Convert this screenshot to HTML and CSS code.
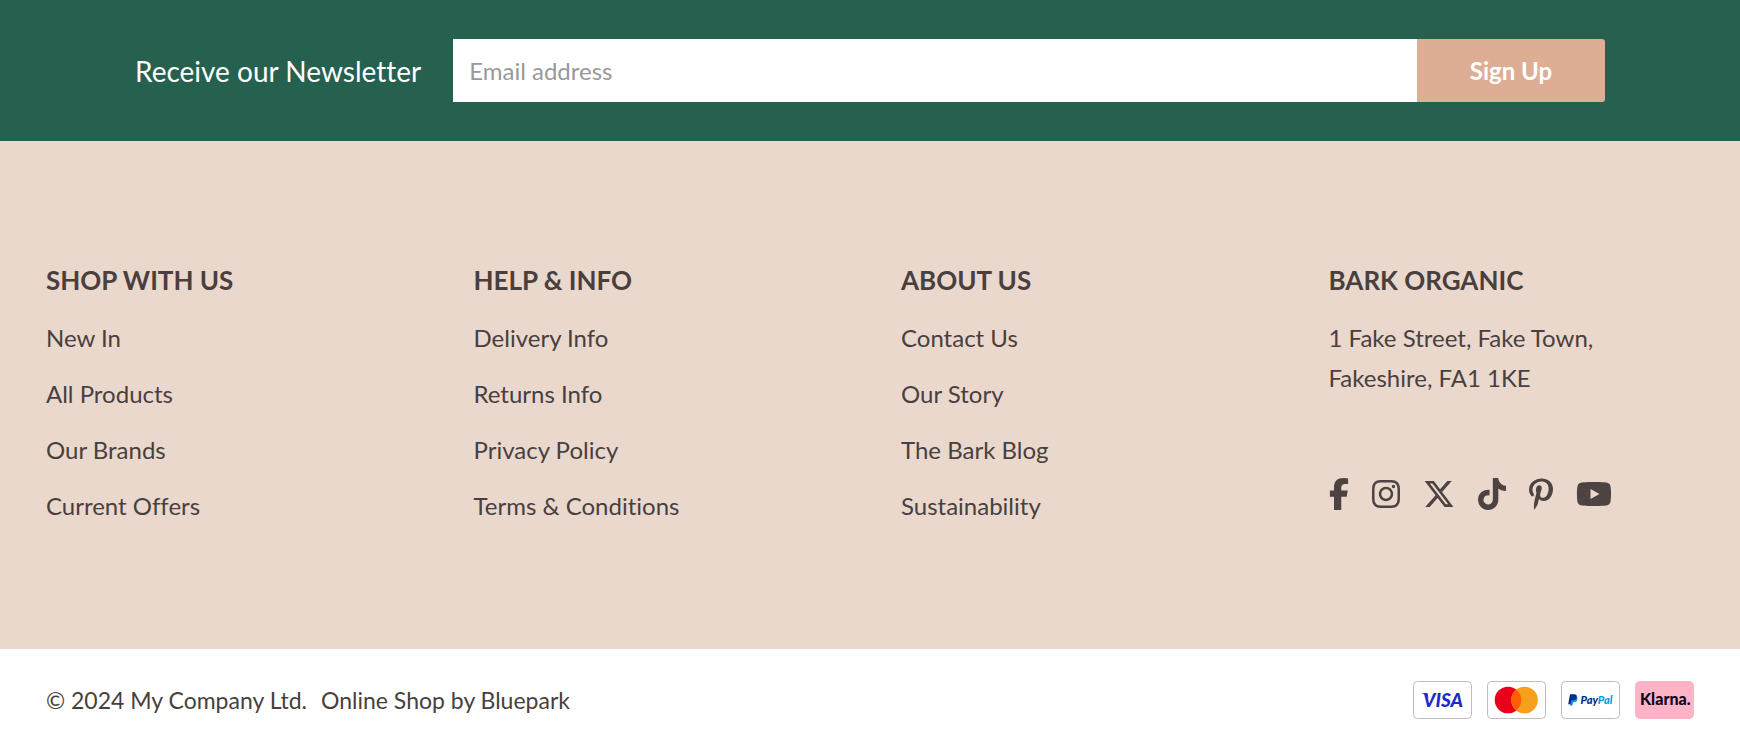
FILE: index.html
```html
<!DOCTYPE html>
<html lang="en">
<head>
<meta charset="utf-8">
<meta name="viewport" content="width=device-width, initial-scale=1">
<title>Bark Organic</title>
<link rel="stylesheet" href="styles.css">
</head>
<body>
<section class="newsletter">
  <form class="newsletter-form">
    <label class="newsletter-label" for="email">Receive our Newsletter</label>
    <div class="newsletter-field">
      <input class="newsletter-input" type="email" id="email" placeholder="Email address">
      <button class="newsletter-button" type="submit">Sign Up</button>
    </div>
  </form>
</section>

<footer class="footer">
  <div class="footer-columns">
    <nav class="column" aria-labelledby="shop">
      <h2 class="column-title" id="shop">SHOP WITH US</h2>
      <ul class="links">
        <li><a href="#">New In</a></li>
        <li><a href="#">All Products</a></li>
        <li><a href="#">Our Brands</a></li>
        <li><a href="#">Current Offers</a></li>
      </ul>
    </nav>
    <nav class="column" aria-labelledby="help">
      <h2 class="column-title" id="help">HELP &amp; INFO</h2>
      <ul class="links">
        <li><a href="#">Delivery Info</a></li>
        <li><a href="#">Returns Info</a></li>
        <li><a href="#">Privacy Policy</a></li>
        <li><a href="#">Terms &amp; Conditions</a></li>
      </ul>
    </nav>
    <nav class="column" aria-labelledby="about">
      <h2 class="column-title" id="about">ABOUT US</h2>
      <ul class="links">
        <li><a href="#">Contact Us</a></li>
        <li><a href="#">Our Story</a></li>
        <li><a href="#">The Bark Blog</a></li>
        <li><a href="#">Sustainability</a></li>
      </ul>
    </nav>
    <section class="column">
      <h2 class="column-title">BARK ORGANIC</h2>
      <address class="address">1 Fake Street, Fake Town,<br>Fakeshire, FA1 1KE</address>
      <div class="social">
        <a href="#" aria-label="Facebook"><svg class="social-icon" viewBox="0 0 320 512"><path d="M80 299.3V512H196V299.3h86.5l18-97.8H196V166.9c0-51.7 20.3-71.5 72.7-71.5c16.3 0 29.4 .4 37 1.2V7.9C291.4 4 256.4 0 236.2 0C129.3 0 80 50.5 80 159.4v42.1H14v97.8H80z"/></svg></a>
        <a href="#" aria-label="Instagram"><svg class="social-icon" viewBox="0 0 448 512"><path d="M224.1 141c-63.6 0-114.9 51.3-114.9 114.9s51.3 114.9 114.9 114.9S339 319.5 339 255.9 287.7 141 224.1 141zm0 189.6c-41.1 0-74.7-33.5-74.7-74.7s33.5-74.7 74.7-74.7 74.7 33.5 74.7 74.7-33.6 74.7-74.7 74.7zm146.4-194.3c0 14.9-12 26.8-26.8 26.8-14.9 0-26.8-12-26.8-26.8s12-26.8 26.8-26.8 26.8 12 26.8 26.8zm76.1 27.2c-1.7-35.9-9.9-67.7-36.2-93.9-26.2-26.2-58-34.4-93.9-36.2-37-2.1-147.9-2.1-184.9 0-35.8 1.7-67.6 9.9-93.9 36.1s-34.4 58-36.2 93.9c-2.1 37-2.1 147.9 0 184.9 1.7 35.9 9.9 67.7 36.2 93.9s58 34.4 93.9 36.2c37 2.1 147.9 2.1 184.9 0 35.9-1.7 67.7-9.9 93.9-36.2 26.2-26.2 34.4-58 36.2-93.9 2.1-37 2.1-147.8 0-184.8zM398.8 388c-7.8 19.6-22.9 34.7-42.6 42.6-29.5 11.7-99.5 9-132.1 9s-102.7 2.6-132.1-9c-19.6-7.8-34.7-22.9-42.6-42.6-11.7-29.5-9-99.5-9-132.1s-2.6-102.7 9-132.1c7.8-19.6 22.9-34.7 42.6-42.6 29.5-11.7 99.5-9 132.1-9s102.7-2.6 132.1 9c19.6 7.8 34.7 22.9 42.6 42.6 11.7 29.5 9 99.5 9 132.1s2.7 102.7-9 132.1z"/></svg></a>
        <a href="#" aria-label="X"><svg class="social-icon" viewBox="0 0 512 512"><path d="M389.2 48h70.6L305.6 224.2 487 464H345L233.7 318.6 106.5 464H35.8L200.7 275.5 26.8 48H172.4L272.9 180.9 389.2 48zM364.4 421.8h39.1L151.1 88h-42L364.4 421.8z"/></svg></a>
        <a href="#" aria-label="TikTok"><svg class="social-icon" viewBox="0 0 448 512"><path d="M448 209.9a210.1 210.1 0 0 1-122.8-39.3V349.4A162.6 162.6 0 1 1 185 188.3V278.2a74.6 74.6 0 1 0 52.2 71.2V0l88 0a121.2 121.2 0 0 0 1.9 22.2h0A122.2 122.2 0 0 0 381 102.4a121.4 121.4 0 0 0 67 20.1z"/></svg></a>
        <a href="#" aria-label="Pinterest"><svg class="social-icon" viewBox="0 0 384 512"><path d="M204 6.5C101.400 6.500 0 74.900 0 185.600 0 256 39.600 296 63.600 296c9.900 0 15.600-27.600 15.600-35.400 0-9.300-23.700-29.100-23.700-67.800 0-80.400 61.200-137.400 140.400-137.400 68.100 0 118.500 38.700 118.500 109.800 0 53.100-21.300 152.700-90.300 152.700-24.900 0-46.200-18-46.200-43.800 0-37.800 26.400-74.400 26.400-113.400 0-66.200-93.900-54.200-93.900 25.800 0 16.800 2.100 35.400 9.600 50.700-13.800 59.400-42 147.900-42 209.100 0 18.900 2.700 37.500 4.500 56.400 3.400 3.800 1.700 3.400 6.900 1.500 50.400-69 48.600-82.500 71.400-172.800 12.300 23.400 44.100 36 69.300 36 106.200 0 153.900-103.500 153.900-196.800C384 71.300 298.200 6.500 204 6.500z"/></svg></a>
        <a href="#" aria-label="YouTube"><svg class="social-icon" viewBox="0 0 576 512"><path d="M549.700 124.100c-6.300-23.700-24.800-42.300-48.300-48.600C458.800 64 288 64 288 64S117.200 64 74.600 75.500c-23.500 6.300-42 24.900-48.300 48.600-11.400 42.900-11.400 132.300-11.400 132.300s0 89.400 11.400 132.300c6.300 23.700 24.800 41.500 48.300 47.800C117.200 448 288 448 288 448s170.800 0 213.400-11.500c23.500-6.300 42-24.200 48.300-47.800 11.400-42.900 11.400-132.300 11.400-132.300s0-89.400-11.400-132.300zM232.200 337.600V175.200l142.700 81.200-142.700 81.200z"/></svg></a>
      </div>
    </section>
  </div>
</footer>

<div class="bottom">
  <p class="legal"><span>© 2024 My Company Ltd.</span><a href="#">Online Shop by Bluepark</a></p>
  <ul class="payments">
    <li><svg class="card" viewBox="0 0 59 38" role="img" aria-label="Visa">
      <rect class="card-frame" x=".5" y=".5" width="58" height="37" rx="4"/>
      <path fill="#1c2bc9" d="M8 12.200h6.500l1 5C13.800 14.500 11.500 13 8 12.200z"/>
      <text class="visa" x="10" y="26">VISA</text>
    </svg></li>
    <li><svg class="card" viewBox="0 0 59 38" role="img" aria-label="Mastercard">
      <rect class="card-frame" x=".5" y=".5" width="58" height="37" rx="4"/>
      <circle cx="21" cy="19" r="13.300" fill="#eb001b"/>
      <circle cx="37.500" cy="19" r="13.300" fill="#f79e1b"/>
      <path fill="#ff5f00" d="M29.250 8.570a13.300 13.300 0 0 1 0 20.860a13.300 13.300 0 0 1 0-20.860z"/>
    </svg></li>
    <li><svg class="card" viewBox="0 0 59 38" role="img" aria-label="PayPal">
      <rect class="card-frame" x=".5" y=".5" width="58" height="37" rx="4"/>
      <path fill="#0093de" d="M15.300 15.500c1.500.8 1.500 2.800.5 4.300-.8 1.100-2 1.400-3.700 1.400l-.7 3.200H8.900l1.500-7z"/>
      <path fill="#002d8a" d="M9 13.300h4.200c2.300 0 3 1.300 2.500 3.100-.5 2-2 2.900-4.200 2.900h-1.200l-.7 3.900H7.200z"/>
      <text class="paypal" x="19.500" y="22.500">Pay<tspan fill="#009cde">Pal</tspan></text>
    </svg></li>
    <li><svg class="card" viewBox="0 0 59 38" role="img" aria-label="Klarna">
      <rect width="59" height="38" rx="5" fill="#ffb3c7"/>
      <text class="klarna" x="5" y="24">Klarna.</text>
    </svg></li>
  </ul>
</div>
</body>
</html>
```
FILE: styles.css
```css
* {
  box-sizing: border-box;
}

body {
  margin: 0;
  background: #fff;
  color: #483f3e;
  font-family: Lato, "Liberation Sans", sans-serif;
  font-size: 24px;
  font-variant-ligatures: none;
  line-height: 40px;
}

a {
  color: inherit;
  text-decoration: none;
}

ul {
  margin: 0;
  padding: 0;
  list-style: none;
}

.newsletter {
  padding: 39px 24px;
  background: #266150;
}

.newsletter-form {
  display: flex;
  align-items: center;
  gap: 32px;
  max-width: 1470px;
  margin: 0 auto;
}

.newsletter-label {
  color: #fff;
  font-size: 28px;
}

.newsletter-field {
  display: flex;
  flex: 1;
}

.newsletter-input {
  flex: 1;
  min-width: 0;
  height: 63px;
  padding: 0 16px;
  border: 0;
  border-radius: 0;
  background: #fff;
  color: #483f3e;
  font: inherit;
}

.newsletter-input::placeholder {
  color: #999;
  opacity: 1;
}

.newsletter-button {
  width: 188px;
  border: 0;
  border-radius: 0 3px 3px 0;
  background: #ddae93;
  color: #fff;
  font: inherit;
  font-weight: 700;
}

.footer {
  padding: 119px 46px 123px;
  background: #ebd8cd;
}

.footer-columns {
  display: grid;
  grid-template-columns: repeat(4, 1fr);
  gap: 62px;
}

.column-title {
  margin: 0 0 18px;
  font-size: 26px;
  font-weight: 700;
  line-height: 40px;
}

.links {
  display: grid;
  gap: 16px;
}

.address {
  font-style: normal;
}

.social {
  display: flex;
  gap: 23px;
  margin-top: 80px;
}

.social a {
  display: block;
}

.social-icon {
  display: block;
  width: auto;
  height: 32px;
  fill: #4d4342;
}

.bottom {
  display: flex;
  align-items: center;
  justify-content: space-between;
  padding: 31px 46px;
}

.legal {
  display: flex;
  gap: 14px;
  margin: 0;
  font-size: 23px;
}

.payments {
  display: flex;
  gap: 15px;
}

.card {
  display: block;
  width: 59px;
  height: 38px;
}

.card-frame {
  fill: #fff;
  stroke: #bdbdbd;
}

.visa {
  fill: #1c2bc9;
  font-size: 19px;
  font-style: italic;
  font-weight: 900;
}

.paypal {
  fill: #002d8a;
  font-size: 11px;
  font-style: italic;
  font-weight: 900;
}

.klarna {
  fill: #0b051d;
  font-size: 16px;
  font-weight: 900;
}
```
